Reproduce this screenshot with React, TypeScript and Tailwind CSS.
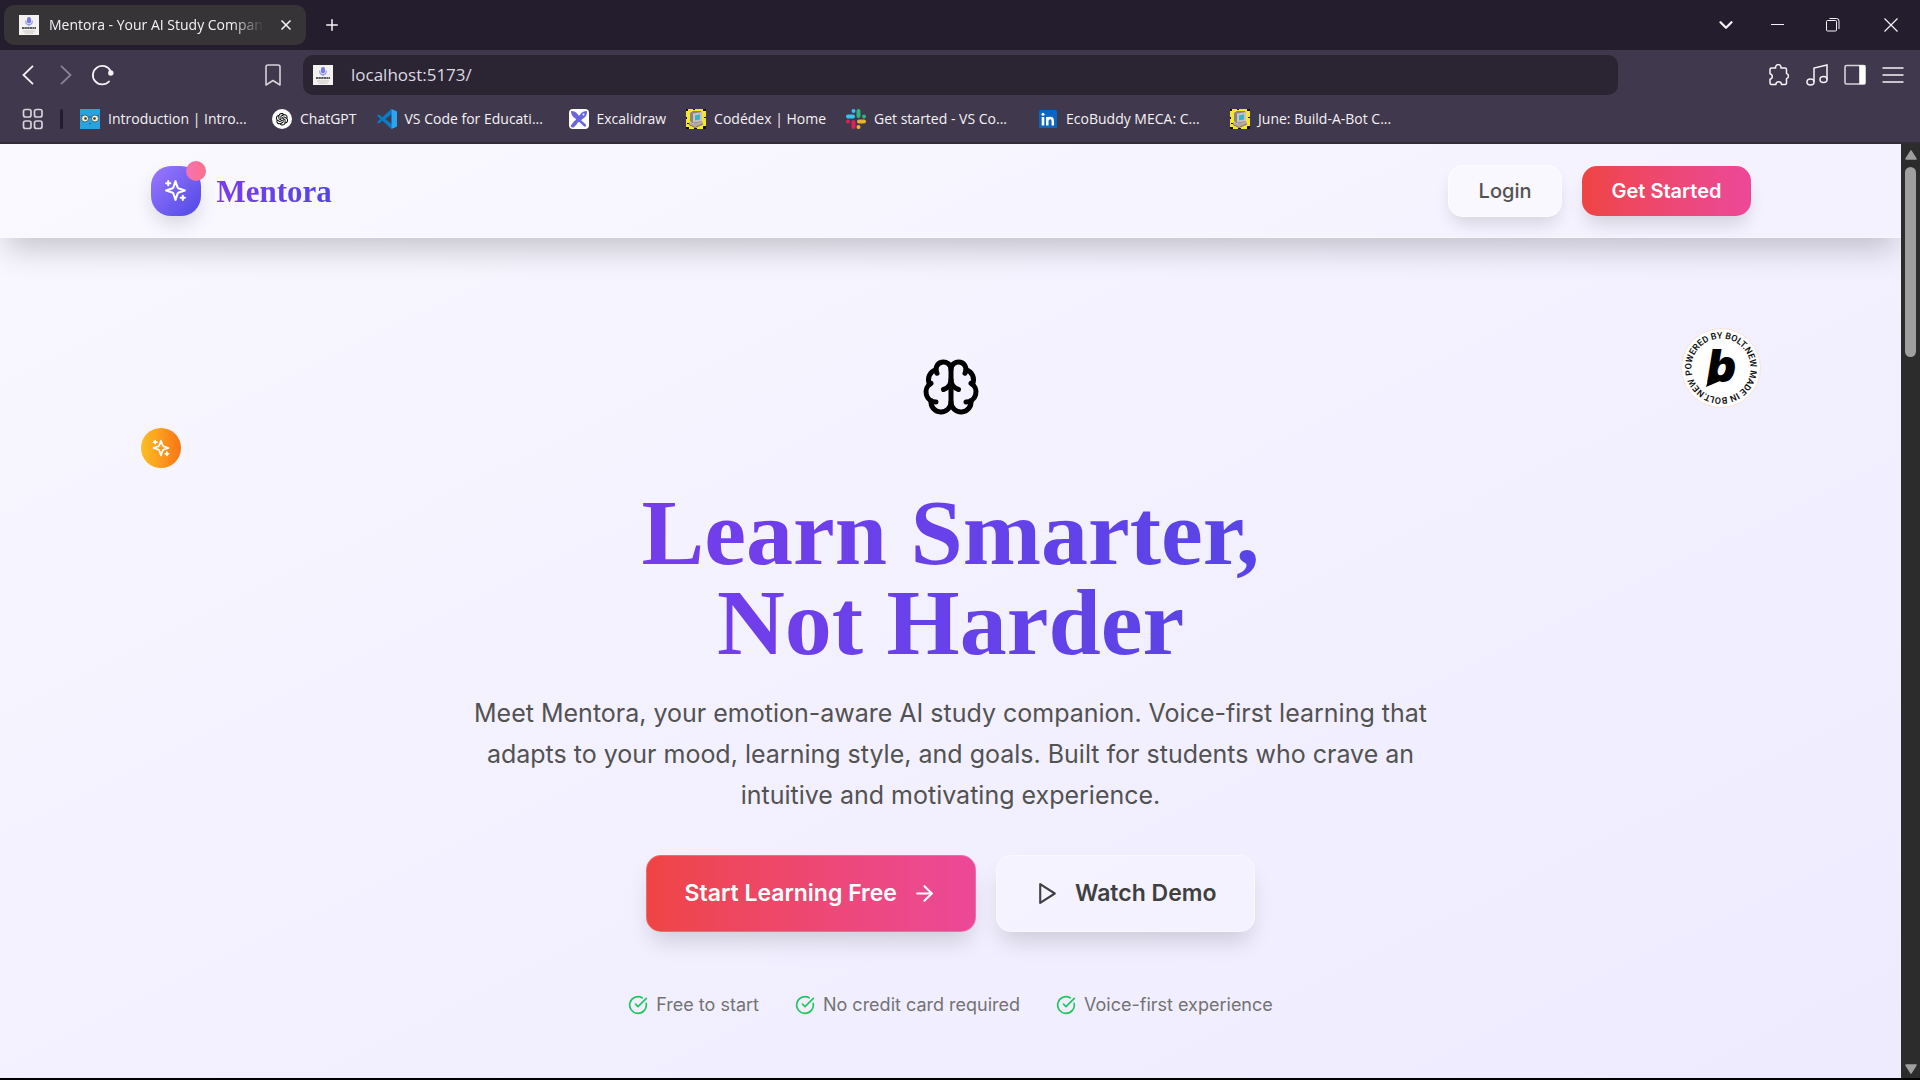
import type { ReactNode } from 'react';
import { ArrowRight, Brain, ChevronDown, CircleCheckBig, Plus, X } from 'lucide-react';
import { AiOutlineOpenAI } from 'react-icons/ai';

function Sparkles({ className }: { className?: string }) {
  return (
    <svg
      viewBox="0 0 24 24"
      fill="none"
      stroke="currentColor"
      strokeWidth="2"
      strokeLinecap="round"
      strokeLinejoin="round"
      className={className}
    >
      <path d="m12 3-1.912 5.813a2 2 0 0 1-1.275 1.275L3 12l5.813 1.912a2 2 0 0 1 1.275 1.275L12 21l1.912-5.813a2 2 0 0 1 1.275-1.275L21 12l-5.813-1.912a2 2 0 0 1-1.275-1.275L12 3Z" />
      <path d="M5 3v4M19 17v4M3 5h4M17 19h4" />
    </svg>
  );
}

function MentoraFavicon() {
  return (
    <svg viewBox="0 0 20 20" className="size-5 shrink-0">
      <rect width="20" height="20" fill="#f4f2ee" />
      <rect x="8" y="2" width="4" height="6.5" rx="2" fill="#7a7bea" />
      <path d="M6.8 5.5v1a3.2 3.2 0 0 0 6.4 0v-1M10 9.7v1.5" fill="none" stroke="#8f9ae6" strokeWidth="1.2" />
      <path d="M3 13h14" stroke="#5a5860" strokeWidth="2" strokeDasharray="2.2 .4" />
      <path d="M4 16h12M5.5 18h9" stroke="#bbb" strokeWidth=".8" />
    </svg>
  );
}

function OwlIcon() {
  return (
    <svg viewBox="0 0 20 20" className="size-5 shrink-0">
      <rect width="20" height="20" fill="#27a3df" />
      <path d="M1 6.5 8.5 8h3L19 6.5" fill="none" stroke="#1578ad" strokeWidth="1.5" />
      <circle cx="5" cy="9.5" r="3.5" fill="#f5f0d8" stroke="#34505c" strokeWidth=".8" />
      <circle cx="15" cy="9.5" r="3.5" fill="#f5f0d8" stroke="#34505c" strokeWidth=".8" />
      <circle cx="5.5" cy="9.5" r="1.3" fill="#3a342c" />
      <circle cx="14.5" cy="9.5" r="1.3" fill="#3a342c" />
      <path d="m9 14 1 1.5 1-1.5z" fill="#17506f" />
    </svg>
  );
}

function ChatGptIcon() {
  return (
    <span className="flex size-5 shrink-0 items-center justify-center rounded-full bg-white text-black">
      <AiOutlineOpenAI className="size-4" />
    </span>
  );
}

function VsCodeIcon() {
  return (
    <svg viewBox="0 0 24 24" className="size-5 shrink-0">
      <path d="M17.5 0 6.8 10.2 2.3 6.7.5 7.6v1.2L17.5 24z" fill="#0a7bc4" />
      <path d="M17.5 24 6.8 13.8l-4.500 3.500-1.800-.9v-1.200L17.500 0z" fill="#0a7bc4" />
      <path d="m17.5 6.4-7.4 5.6 7.4 5.6z" fill="#40384c" />
      <path d="M17.5 0 24 3v18l-6.5 3z" fill="#2aa5f2" />
    </svg>
  );
}

function ExcalidrawIcon() {
  return (
    <svg viewBox="0 0 20 20" className="size-5 shrink-0">
      <rect width="20" height="20" rx="4" fill="#fff" />
      <path d="M2 2c3 0 5 1 6.5 3L11 8l-3 3-3.5-3C3 6.5 2 5 2 2Z" fill="#6965db" />
      <path d="M18 2c-3 0-5 1-6.5 3L5 13l2 2 8.5-6.5C17.5 7 18 5 18 2Z" fill="#6965db" />
      <path d="m9.5 10.5 6.5 6M6 13l-3 4M7 14.5 4 17.5" stroke="#6965db" strokeWidth="2.4" strokeLinecap="round" />
      <circle cx="14.5" cy="5.5" r="1" fill="#fff" />
    </svg>
  );
}

function CodedexIcon() {
  return (
    <svg viewBox="0 0 20 20" className="size-5 shrink-0">
      <rect width="20" height="20" fill="#f5e52c" />
      <path d="M0 0h2v2H0zM17 0h3v2h-3zM7 0h2v1H7zM0 8h1v2H0zM18 8h2v1h-2zM1 14h2v1H1zM0 18h3v2H0zM17 17h3v3h-3zM8 19h3v1H8z" fill="#15140c" />
      <path d="m4 4 3-2h8l1 2v8l-3 2H6l-2-2z" fill="#8d8488" />
      <path d="m7 4.5 9-1.500v9l-9 1.500z" fill="#c9c2c3" />
      <path d="m9 6.5 5-1v5l-5 1z" fill="#35b6c8" />
      <path d="m3 13 4 1.500 9-2.500 1 2.500L9 18l-6-3z" fill="#b0a7aa" />
      <path d="m3 15 6 3 8-3.500v1L9 19l-6-3z" fill="#6f666a" />
    </svg>
  );
}

function SlackIcon() {
  return (
    <svg viewBox="0 0 20 20" className="size-5 shrink-0" strokeWidth="4" strokeLinecap="round">
      <path d="M2 7.5h5M7.5 2v.01" stroke="#36c5f0" />
      <path d="M12.5 2v5M18 7.5h.01" stroke="#2eb67d" />
      <path d="M18 12.5h-5M12.5 18v.01" stroke="#ecb22e" />
      <path d="M7.5 18v-5M2 12.5h.01" stroke="#e01e5a" />
    </svg>
  );
}

function LinkedInIcon() {
  return (
    <svg viewBox="0 0 20 20" className="size-5 shrink-0">
      <rect x="1" y="1" width="18" height="18" rx="1.5" fill="#0a66c2" />
      <circle cx="5" cy="5.2" r="1.5" fill="#fff" />
      <path d="M5 8v8.5" stroke="#fff" strokeWidth="2.6" />
      <path d="M9.3 16.5V8M9.3 12c0-2 1.2-2.900 2.900-2.900s2.600 1 2.600 3v4.400" fill="none" stroke="#fff" strokeWidth="2.5" />
    </svg>
  );
}

type Bookmark = { label: string; icon: ReactNode; long?: boolean };

const bookmarks: Bookmark[] = [
  { label: 'Introduction | Intro...', icon: <OwlIcon />, long: true },
  { label: 'ChatGPT', icon: <ChatGptIcon /> },
  { label: 'VS Code for Educati...', icon: <VsCodeIcon />, long: true },
  { label: 'Excalidraw', icon: <ExcalidrawIcon /> },
  { label: 'Codédex | Home', icon: <CodedexIcon /> },
  { label: 'Get started - VS Co...', icon: <SlackIcon />, long: true },
  { label: 'EcoBuddy MECA: C...', icon: <LinkedInIcon />, long: true },
  { label: 'June: Build-A-Bot C...', icon: <CodedexIcon />, long: true },
];

const perks = ['Free to start', 'No credit card required', 'Voice-first experience'];

function TabStrip() {
  return (
    <div className="flex h-[50px] shrink-0 items-center justify-between bg-[#241d2e] pl-1">
      <div className="flex items-center">
        <div className="flex h-10 w-[302px] items-center rounded-[10px] bg-[#373438] pr-2.5 pl-[15px]">
          <MentoraFavicon />
          <span className="ml-2.5 flex-1 overflow-hidden text-sm whitespace-nowrap [mask-image:linear-gradient(to_right,black_85%,transparent)]">
            Mentora - Your AI Study Compan
          </span>
          <button aria-label="Close tab" className="ml-3 flex size-5 items-center justify-center">
            <X className="size-4" strokeWidth={2.5} />
          </button>
        </div>
        <button aria-label="New tab" className="ml-4 flex size-5 items-center justify-center">
          <Plus className="size-[18px]" />
        </button>
      </div>
      <div className="flex items-center">
        <button aria-label="Search tabs" className="flex w-10 justify-center">
          <ChevronDown className="size-[22px]" strokeWidth={2.5} />
        </button>
        <button aria-label="Minimize" className="flex w-[62px] justify-center">
          <svg viewBox="0 0 14 14" className="size-3.5" fill="none" stroke="currentColor">
            <path d="M1 6.5h13" />
          </svg>
        </button>
        <button aria-label="Restore" className="flex w-[50px] justify-center">
          <svg viewBox="0 0 14 14" className="size-3.5" fill="none" stroke="currentColor">
            <rect x=".5" y="2.5" width="10" height="10.5" rx="1" />
            <path d="M3.5.5h7a2.500 2.500 0 0 1 2.500 2.500v8" />
          </svg>
        </button>
        <button aria-label="Close" className="flex w-[62px] justify-center pl-1">
          <svg viewBox="0 0 14 14" className="size-3.5" fill="none" stroke="currentColor" strokeWidth="1.2">
            <path d="m.5.5 13 13M13.5.5l-13 13" />
          </svg>
        </button>
      </div>
    </div>
  );
}

function Toolbar() {
  return (
    <div className="flex h-[50px] shrink-0 items-center bg-[#40384c] pr-4 pl-3">
      <button aria-label="Back" className="flex w-8 justify-center">
        <svg viewBox="0 0 12 20" className="h-5 w-3" fill="none" stroke="currentColor" strokeWidth="1.8">
          <path d="M11 .8 1.500 10l9.500 9.200" />
        </svg>
      </button>
      <button aria-label="Forward" className="ml-1.5 flex w-8 justify-center text-[#8a8494]">
        <svg viewBox="0 0 12 20" className="h-5 w-3" fill="none" stroke="currentColor" strokeWidth="1.8">
          <path d="M1 .8 10.500 10 1 19.200" />
        </svg>
      </button>
      <button aria-label="Reload" className="ml-2 flex w-6 justify-center">
        <svg viewBox="0 0 24 24" className="size-6" fill="none" stroke="currentColor" strokeWidth="1.8" strokeLinecap="round">
          <path d="M19 18.5A9.3 9.3 0 1 1 20.5 8" />
          <circle cx="20.8" cy="10" r="2.7" fill="currentColor" stroke="none" />
        </svg>
      </button>
      <button aria-label="Bookmark this page" className="ml-[147px] flex w-6 justify-center">
        <svg viewBox="0 0 16 22" className="h-[22px] w-4" fill="none" stroke="#d5d2da" strokeWidth="1.6" strokeLinejoin="round">
          <path d="M1 3a2 2 0 0 1 2-2h10a2 2 0 0 1 2 2v18l-7-4.500L1 21z" />
        </svg>
      </button>
      <div className="ml-[18px] flex h-10 flex-1 items-center rounded-[10px] bg-[#2b2433] px-2.5">
        <MentoraFavicon />
        <input
          aria-label="Address"
          defaultValue="localhost:5173/"
          className="ml-[18px] flex-1 bg-transparent text-[17px] text-[#dcd9e0] outline-none"
        />
      </div>
      <div className="ml-[150px] flex items-center gap-4">
        <button aria-label="Extensions">
          <svg viewBox="0 0 22 22" className="size-[22px]" fill="none" stroke="currentColor" strokeWidth="1.5" strokeLinejoin="round">
            <path d="M3.5 4h4.200a2.700 2.700 0 1 1 5.200 0H17a1.500 1.500 0 0 1 1.500 1.500v4a2.700 2.700 0 0 1 0 5.200V19a1.500 1.500 0 0 1-1.500 1.500h-3.500a2.800 2.800 0 0 0-5.600 0H3.500A1.500 1.500 0 0 1 2 19v-3.700a2.800 2.800 0 0 0 0-5.500V5.500A1.500 1.500 0 0 1 3.500 4z" />
          </svg>
        </button>
        <button aria-label="Media">
          <svg viewBox="0 0 22 22" className="size-[22px]" fill="none" stroke="currentColor" strokeWidth="1.5">
            <path d="M8 18V4l13-3v14.500" />
            <ellipse cx="4.5" cy="18" rx="3.5" ry="3" />
            <ellipse cx="17.5" cy="15.5" rx="3.5" ry="3" />
          </svg>
        </button>
        <button aria-label="Side panel">
          <svg viewBox="0 0 22 22" className="size-[22px]" fill="none" stroke="#d5d2da" strokeWidth="1.6">
            <rect x="1" y="1.5" width="20" height="18.5" rx="1.5" />
            <path d="M16 2h4.500v17.500H16z" fill="#fff" stroke="#fff" />
          </svg>
        </button>
        <button aria-label="Menu">
          <svg viewBox="0 0 22 22" className="size-[22px]" fill="none" stroke="currentColor" strokeWidth="1.6">
            <path d="M.5 4h21M.5 11h21M.5 18h21" />
          </svg>
        </button>
      </div>
    </div>
  );
}

function BookmarksBar() {
  return (
    <div className="flex h-[44px] shrink-0 items-center border-b-2 border-[#302d34] bg-[#40384c] pb-1 pl-[22px]">
      <button aria-label="Apps">
        <svg viewBox="0 0 22 22" className="size-[22px]" fill="none" stroke="#d5d2da" strokeWidth="1.7">
          <rect x="1.5" y="1.5" width="7.5" height="7.5" rx="2" />
          <rect x="12.5" y="1.5" width="7.5" height="7.5" rx="2" />
          <rect x="1.5" y="13" width="7.5" height="7.5" rx="2" />
          <rect x="12.5" y="13" width="7.5" height="7.5" rx="2" />
        </svg>
      </button>
      <div className="mr-[17px] ml-4 h-5 w-[3px] rounded-full bg-[#241d2e]" />
      <div className="flex gap-5">
        {bookmarks.map((b) => (
          <a key={b.label} href="#" className="flex items-center gap-2 text-sm whitespace-nowrap">
            {b.icon}
            <span className={b.long ? 'w-36' : ''}>{b.label}</span>
          </a>
        ))}
      </div>
    </div>
  );
}

function BoltBadge() {
  return (
    <a href="#" aria-label="Powered by Bolt.new" className="absolute top-[184px] right-[140px]">
      <svg viewBox="0 0 80 80" className="size-20">
        <circle cx="40" cy="40" r="39.5" fill="#fff" stroke="#f8e3d6" />
        <defs>
          <path id="ring" d="M10.5 40a29.500 29.500 0 1 1 59 0a29.500 29.500 0 1 1-59 0" />
        </defs>
        <g transform="rotate(-14 40 40)">
          <text className="font-[Roboto] text-[9px] font-semibold" fill="#111">
            <textPath href="#ring">POWERED BY BOLT.NEW MADE IN BOLT.NEW</textPath>
          </text>
        </g>
        <path d="M30 42 25 59l14-6z" fill="#000" />
        <text x="26" y="54" className="font-[Inter] text-[45px] font-black italic" fill="#000">
          b
        </text>
      </svg>
    </a>
  );
}

function Nav() {
  return (
    <nav className="relative z-10 border-b border-white/40 bg-white/10 shadow-[0_16px_32px_-6px_rgba(0,0,0,0.22)]">
      <div className="mx-auto flex h-[93px] max-w-[1600px] items-center justify-between">
        <a href="#" className="flex items-center gap-4">
          <span className="relative flex size-[50px] items-center justify-center rounded-[20px] bg-linear-to-br from-[#9d78ff] to-[#4f46e5] text-white shadow-[0_10px_20px_-3px_rgba(0,0,0,0.15)]">
            <Sparkles className="size-[25px]" />
            <span className="absolute -top-[5px] -right-[5px] size-5 rounded-full bg-linear-to-r from-[#f472b6] to-[#fb7185]" />
          </span>
          <span className="bg-linear-to-r from-[#7c3aed] to-[#4f46e5] bg-clip-text pt-1 font-['Liberation_Serif',serif] text-[31px] font-bold text-transparent">
            Mentora
          </span>
        </a>
        <div className="flex items-center gap-5">
          <button className="h-[52px] rounded-[15px] border border-white/50 bg-white/40 px-[30px] text-xl font-medium text-[#525252] shadow-[0_10px_18px_-4px_rgba(0,0,0,0.14)]">
            Login
          </button>
          <button className="h-[50px] rounded-[15px] bg-linear-to-r from-[#ef4444] to-[#ec4899] px-[29px] text-xl font-semibold text-white shadow-[0_12px_18px_-4px_rgba(0,0,0,0.14)]">
            Get Started
          </button>
        </div>
      </div>
    </nav>
  );
}

function Hero() {
  return (
    <section className="flex flex-col items-center px-10 pt-[119px] text-center">
      <Brain className="size-[60px] text-black" />
      <h1 className="mt-[70px] bg-linear-to-r from-[#7c3aed] to-[#4f46e5] bg-clip-text px-[170px] font-['Liberation_Serif',serif] text-[94px] leading-[90px] font-bold text-transparent">
        Learn Smarter,
        <br />
        Not Harder
      </h1>
      <p className="mt-[26px] max-w-[960px] text-[25px] leading-[41px] text-[#525252]">
        Meet Mentora, your emotion-aware AI study companion. Voice-first learning that adapts to
        your mood, learning style, and goals. Built for students who crave an intuitive and
        motivating experience.
      </p>
      <div className="mt-[39px] flex gap-5">
        <button className="flex h-[77px] items-center gap-[15px] rounded-[15px] border border-white/20 bg-linear-to-r from-[#ef4444] to-[#ec4899] bg-origin-border px-[38px] text-[23px] font-semibold text-white shadow-[0_14px_22px_-5px_rgba(0,0,0,0.15)]">
          Start Learning Free
          <ArrowRight className="size-[25px]" />
        </button>
        <button className="flex h-[77px] items-center gap-[15px] rounded-[15px] border border-white/40 bg-white/25 px-[38px] text-[23px] font-semibold text-[#404040] shadow-[0_14px_22px_-5px_rgba(0,0,0,0.15)]">
          <svg viewBox="0 0 24 24" className="size-[25px]" fill="none" stroke="currentColor" strokeWidth="2" strokeLinejoin="round">
            <path d="m5 3 14 9-14 9z" />
          </svg>
          Watch Demo
        </button>
      </div>
      <ul className="mt-[60px] flex gap-9 text-lg leading-[25px] text-[#737373]">
        {perks.map((perk) => (
          <li key={perk} className="flex items-center gap-2">
            <CircleCheckBig className="size-5 text-[#22c55e]" />
            {perk}
          </li>
        ))}
      </ul>
    </section>
  );
}

function Scrollbar() {
  return (
    <div className="flex w-[19px] shrink-0 flex-col items-center justify-between bg-[#2c2c2c] pt-1.5 pb-1">
      <div className="flex flex-col items-center gap-[7px]">
        <svg viewBox="0 0 12 10" className="h-2.5 w-3">
          <path d="M6 1 11 9H1z" fill="#9f9f9f" stroke="#9f9f9f" strokeWidth="1.5" strokeLinejoin="round" />
        </svg>
        <div className="h-[190px] w-[11px] rounded-full bg-[#9f9f9f]" />
      </div>
      <svg viewBox="0 0 12 10" className="h-2.5 w-3">
        <path d="M6 9 11 1H1z" fill="#9f9f9f" stroke="#9f9f9f" strokeWidth="1.5" strokeLinejoin="round" />
      </svg>
    </div>
  );
}

export default function App() {
  return (
    <div className="flex h-screen flex-col bg-black pb-0.5">
      <header className="font-['Open_Sans','Noto_Sans',sans-serif] text-[#f4f2f6]">
        <TabStrip />
        <Toolbar />
        <BookmarksBar />
      </header>
      <div className="flex min-h-0 flex-1">
        <main className="relative flex-1 overflow-hidden bg-linear-to-br from-[#f9f8ff] via-[#f3f1ff] to-[#eeebff] font-[Inter,sans-serif]">
          <Nav />
          <Hero />
          <span className="absolute top-[284px] left-[141px] flex size-10 items-center justify-center rounded-full bg-linear-to-r from-[#fbbf24] to-[#f97316] text-white">
            <Sparkles className="size-5" />
          </span>
          <BoltBadge />
        </main>
        <Scrollbar />
      </div>
    </div>
  );
}
